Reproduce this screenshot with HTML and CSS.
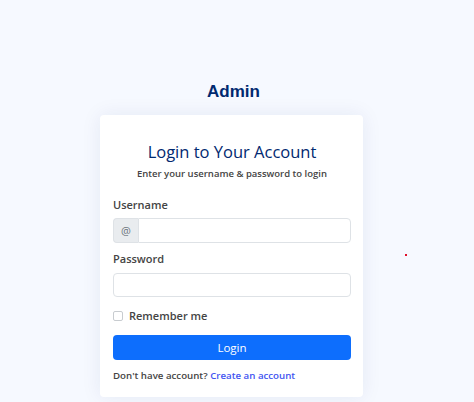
FILE: index.html
```html
<!DOCTYPE html>
<html lang="en">
<head>
<meta charset="utf-8">
<title>Admin - Login</title>
<link rel="stylesheet" href="styles.css">
</head>
<body>
<main class="page">
  <div class="wrap">
    <div class="brand">Admin</div>
    <div class="card">
      <h5 class="card-title">Login to Your Account</h5>
      <p class="subtitle">Enter your username &amp; password to login</p>
      <form class="form">
        <label class="label" for="u">Username</label>
        <div class="input-group">
          <span class="prefix">@</span>
          <input class="input grouped" id="u" type="text">
        </div>
        <label class="label pw" for="p">Password</label>
        <input class="input single" id="p" type="password">
        <div class="check-row">
          <span class="check"></span>
          <span class="check-label">Remember me</span>
        </div>
        <button class="btn" type="button">Login</button>
        <p class="footer">Don't have account? <a class="link" href="#">Create an account</a></p>
      </form>
    </div>
  </div>
  <span class="dot"></span>
</main>
</body>
</html>
```
FILE: styles.css
```css
html, body {
  margin: 0;
  padding: 0;
}
body {
  background: #f6f9ff;
  font-family: "Open Sans", "Liberation Sans", sans-serif;
  color: #444444;
  width: 474px;
  height: 402px;
  overflow: hidden;
}
.page {
  position: relative;
  height: 402px;
}
.wrap {
  width: 263px;
  margin-left: 100px;
  padding-top: 82px;
  display: flex;
  flex-direction: column;
}
.brand {
  font-family: "Liberation Sans", Arial, sans-serif;
  font-weight: 700;
  font-size: 17px;
  line-height: 20px;
  color: #012970;
  text-align: center;
  padding-left: 4px;
  margin-bottom: 13px;
}
.card {
  background: #ffffff;
  border-radius: 4px;
  box-shadow: 0 0 20px rgba(1, 41, 112, 0.08);
  padding: 27px 12px 0 13px;
  height: 282px;
  box-sizing: border-box;
}
.card-title {
  margin: 0;
  font-family: "Open Sans", sans-serif;
  font-weight: 400;
  font-size: 16.5px;
  line-height: 20px;
  color: #012970;
  text-align: center;
}
.subtitle {
  margin: 5px 0 0;
  font-size: 9.5px;
  line-height: 14px;
  font-weight: 600;
  text-align: center;
  color: #444444;
}
.form {
  display: flex;
  flex-direction: column;
  margin-top: 16px;
}
.label {
  font-size: 11px;
  line-height: 16px;
  font-weight: 600;
  color: #444444;
  margin-bottom: 5px;
}
.label.pw {
  margin-top: 8px;
  margin-bottom: 6px;
}
.input-group {
  display: flex;
  height: 25px;
}
.prefix {
  width: 25px;
  box-sizing: border-box;
  background: #e9ecef;
  border: 1px solid #dee2e6;
  border-right: none;
  border-radius: 4px 0 0 4px;
  display: flex;
  align-items: center;
  justify-content: center;
  font-size: 11px;
  color: #6c757d;
}
.input {
  box-sizing: border-box;
  border: 1px solid #dee2e6;
  background: #ffffff;
  margin: 0;
  padding: 0 8px;
  font: inherit;
  outline: none;
}
.input.grouped {
  flex: 1;
  min-width: 0;
  height: 25px;
  border-radius: 0 4px 4px 0;
}
.input.single {
  width: 100%;
  height: 24px;
  border-radius: 4px;
}
.check-row {
  display: flex;
  align-items: center;
  gap: 6px;
  margin-top: 11px;
  height: 16px;
}
.check {
  width: 10px;
  height: 10px;
  box-sizing: border-box;
  border: 1px solid #c8ccd0;
  border-radius: 2px;
  background: #fff;
}
.check-label {
  font-size: 11px;
  line-height: 16px;
  font-weight: 600;
  color: #444444;
}
.btn {
  margin-top: 11px;
  height: 25px;
  border: none;
  border-radius: 4px;
  background: #0d6efd;
  color: #ffffff;
  font-family: "Open Sans", sans-serif;
  font-size: 11.5px;
  padding: 0;
}
.footer {
  margin: 9px 0 0;
  font-size: 9.7px;
  line-height: 14px;
  font-weight: 600;
  color: #444444;
}
.link {
  color: #4154f1;
  text-decoration: none;
}
.dot {
  position: absolute;
  left: 405px;
  top: 254px;
  width: 2px;
  height: 2px;
  background: #e0102a;
}
```
